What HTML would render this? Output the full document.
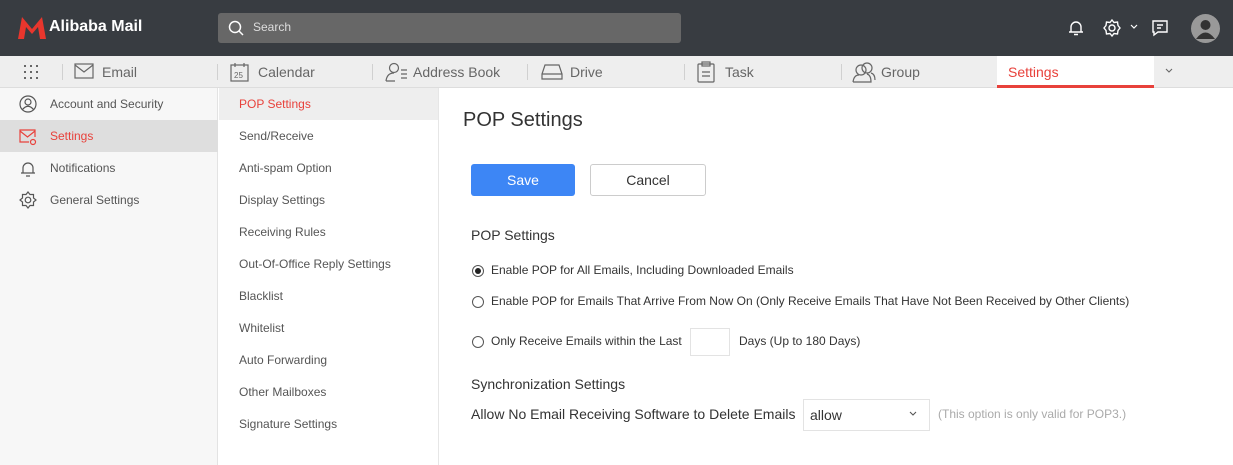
<!DOCTYPE html>
<html><head><meta charset="utf-8"><style>
*{box-sizing:border-box;margin:0;padding:0}
body{width:1233px;height:465px;overflow:hidden;font-family:"Liberation Sans",Arial,sans-serif;background:#fff;position:relative;color:#333}
.abs{position:absolute}
#hdr{left:0;top:0;width:1233px;height:56px;background:#383c41}
#tabs{left:0;top:56px;width:1233px;height:32px;background:#eeeeee;border-bottom:1px solid #ddd}
.tab{position:absolute;top:0;height:32px;line-height:32px;font-size:14px;color:#666}
.sep{position:absolute;top:8px;width:1px;height:16px;background:#d0d0d0}
#side{left:0;top:88px;width:218px;height:377px;background:#f7f7f7;border-right:1px solid #e3e3e3}
.si{position:absolute;left:0;width:218px;height:32px;line-height:32px;font-size:12px;color:#555;padding-left:50px}
#col2{left:219px;top:88px;width:220px;height:377px;background:#fff;border-right:1px solid #e6e6e6}
.ci{position:absolute;left:0;width:219px;height:32px;line-height:32px;font-size:12px;color:#555;padding-left:20px}
.t{position:absolute;font-size:12px;color:#333;white-space:nowrap}
.rad{position:absolute;width:12px;height:12px;border:1px solid #555;border-radius:50%}
</style></head><body>
<div id="hdr" class="abs">
 <svg class="abs" style="left:18px;top:17px" width="28" height="22" viewBox="0 0 28 22"><path d="M0 22 L4 0 L14 12 L24 0 L28 22 L22 22 L20 10 L14 17 L8 10 L6 22Z" fill="#e8362d"/></svg>
 <div class="t" style="left:49px;top:18px;font-size:16px;font-weight:bold;color:#fff">Alibaba Mail</div>
 <div class="abs" style="left:218px;top:13px;width:463px;height:30px;background:#676767;border-radius:3px"></div>
 <svg class="abs" style="left:228px;top:20px" width="16" height="16" viewBox="0 0 16 16"><circle cx="7" cy="7" r="5.5" fill="none" stroke="#fff" stroke-width="1.5"/><path d="M11 11 L15 15" stroke="#fff" stroke-width="1.5"/></svg>
 <div class="t" style="left:253px;top:20px;color:#ddd">Search</div>
 <svg class="abs" style="left:1067px;top:19px" width="18" height="18" viewBox="0 0 18 18" fill="none" stroke="#fff" stroke-width="1.4"><path d="M4 13 V8 a5 5 0 0 1 10 0 V13 Z M2 13 H16 M7 15.5 H11"/></svg>
 <svg class="abs" style="left:1102px;top:18px" width="20" height="20" viewBox="0 0 20 20" fill="none" stroke="#fff" stroke-width="1.4"><circle cx="10" cy="10" r="3"/><path d="M10 2 L12 4.5 L15.5 4 L16 7.5 L18 10 L16 12.5 L15.5 16 L12 15.5 L10 18 L8 15.5 L4.5 16 L4 12.5 L2 10 L4 7.5 L4.5 4 L8 4.5Z"/></svg>
 <svg class="abs" style="left:1130px;top:24px" width="8" height="6" viewBox="0 0 8 6"><path d="M1 1 L4 4 L7 1" stroke="#fff" fill="none" stroke-width="1.2"/></svg>
 <svg class="abs" style="left:1151px;top:19px" width="18" height="18" viewBox="0 0 18 18" fill="none" stroke="#fff" stroke-width="1.4"><path d="M2 2 H16 V13 H7 L3 16 V13 H2Z M6 6 H12 M6 9 H10"/></svg>
 <svg class="abs" style="left:1191px;top:14px" width="29" height="29" viewBox="0 0 29 29"><circle cx="14.5" cy="14.5" r="14.5" fill="#999"/><circle cx="14.5" cy="11" r="5" fill="#333"/><path d="M5 25 Q14.5 12 24 25Z" fill="#333"/></svg>
</div>
<div id="tabs" class="abs">
 <svg class="abs" style="left:23px;top:8px" width="16" height="16"><g fill="#666"><rect x="1" y="1" width="2" height="2"/><rect x="7" y="1" width="2" height="2"/><rect x="13" y="1" width="2" height="2"/><rect x="1" y="7" width="2" height="2"/><rect x="7" y="7" width="2" height="2"/><rect x="13" y="7" width="2" height="2"/><rect x="1" y="13" width="2" height="2"/><rect x="7" y="13" width="2" height="2"/><rect x="13" y="13" width="2" height="2"/></g></svg>
 <div class="sep" style="left:62px"></div><div class="sep" style="left:217px"></div><div class="sep" style="left:372px"></div><div class="sep" style="left:527px"></div><div class="sep" style="left:684px"></div><div class="sep" style="left:841px"></div>
 <svg class="abs" style="left:74px;top:7px" width="20" height="16" fill="none" stroke="#666" stroke-width="1.2"><rect x="1" y="1" width="18" height="14"/><path d="M1 2 L10 9 L19 2"/></svg>
 <div class="tab" style="left:102px">Email</div>
 <svg class="abs" style="left:230px;top:6px" width="20" height="20" fill="none" stroke="#666" stroke-width="1.2"><rect x="1" y="3" width="17" height="16"/><path d="M5 1 V5 M14 1 V5"/><text x="4" y="16" font-size="8" fill="#666" stroke="none" font-family="Liberation Sans">25</text></svg>
 <div class="tab" style="left:258px">Calendar</div>
 <svg class="abs" style="left:385px;top:6px" width="24" height="20" fill="none" stroke="#666" stroke-width="1.2"><circle cx="9" cy="6" r="4.5"/><path d="M1 19 Q2 11 9 11 M1 19 H10 M16 8 H22 M16 12 H22 M16 16 H22"/></svg>
 <div class="tab" style="left:413px">Address Book</div>
 <svg class="abs" style="left:541px;top:8px" width="22" height="16" fill="none" stroke="#666" stroke-width="1.2"><path d="M4 1 H18 L21 10 V15 H1 V10Z M1 10 H21"/></svg>
 <div class="tab" style="left:570px">Drive</div>
 <svg class="abs" style="left:697px;top:5px" width="18" height="22" fill="none" stroke="#666" stroke-width="1.2"><rect x="1" y="3" width="16" height="18" rx="1"/><rect x="5" y="1" width="8" height="4"/><path d="M5 11 H13 M5 15 H13"/></svg>
 <div class="tab" style="left:725px">Task</div>
 <svg class="abs" style="left:852px;top:5px" width="24" height="22" fill="none" stroke="#666" stroke-width="1.2"><circle cx="15" cy="7" r="5"/><circle cx="9" cy="9" r="5"/><path d="M1 21 Q2 14 7 14 M1 21 H19 Q19 14 15 13 M23 19 Q23 13 19 12"/></svg>
 <div class="tab" style="left:881px">Group</div>
 <div class="abs" style="left:997px;top:0;width:157px;height:32px;background:#fff;border-bottom:3px solid #e8413b"></div>
 <div class="tab" style="left:1008px;color:#e8413b">Settings</div>
 <svg class="abs" style="left:1165px;top:12px" width="8" height="6"><path d="M1 1 L4 4 L7 1" stroke="#666" fill="none" stroke-width="1.1"/></svg>
</div>
<div id="side" class="abs">
 <div class="si" style="top:0">Account and Security</div>
 <div class="si" style="top:32px;background:#dedede;color:#e8413b">Settings</div>
 <div class="si" style="top:64px">Notifications</div>
 <div class="si" style="top:96px">General Settings</div>
 <svg class="abs" style="left:19px;top:7px" width="18" height="18" fill="none" stroke="#555" stroke-width="1.2"><circle cx="9" cy="9" r="8"/><circle cx="9" cy="7" r="3"/><path d="M3.5 14.5 Q9 8 14.5 14.5"/></svg>
 <svg class="abs" style="left:19px;top:40px" width="18" height="18" fill="none" stroke="#e8413b" stroke-width="1.2"><path d="M10 14 H1 V2 H16 V9 M1 3 L8.5 9 L16 3"/><circle cx="14" cy="14" r="2.5"/></svg>
 <svg class="abs" style="left:20px;top:72px" width="16" height="18" fill="none" stroke="#555" stroke-width="1.2"><path d="M3 13 V8 a5 5 0 0 1 10 0 V13Z M1 13 H15 M6 16 H10"/></svg>
 <svg class="abs" style="left:19px;top:103px" width="18" height="18" fill="none" stroke="#555" stroke-width="1.2"><circle cx="9" cy="9" r="2.8"/><path d="M9 1 L11 3.5 L14.5 3.5 L14.5 7 L17 9 L14.5 11 L14.5 14.5 L11 14.5 L9 17 L7 14.5 L3.5 14.5 L3.5 11 L1 9 L3.5 7 L3.5 3.5 L7 3.5Z"/></svg>
</div>
<div id="col2" class="abs">
 <div class="ci" style="top:0;background:#eeeeee;color:#e8413b">POP Settings</div>
 <div class="ci" style="top:32px">Send/Receive</div>
 <div class="ci" style="top:64px">Anti-spam Option</div>
 <div class="ci" style="top:96px">Display Settings</div>
 <div class="ci" style="top:128px">Receiving Rules</div>
 <div class="ci" style="top:160px">Out-Of-Office Reply Settings</div>
 <div class="ci" style="top:192px">Blacklist</div>
 <div class="ci" style="top:224px">Whitelist</div>
 <div class="ci" style="top:256px">Auto Forwarding</div>
 <div class="ci" style="top:288px">Other Mailboxes</div>
 <div class="ci" style="top:320px">Signature Settings</div>
</div>
<div class="t" style="left:463px;top:109px;font-size:20px">POP Settings</div>
<div class="abs" style="left:471px;top:164px;width:104px;height:32px;background:#3d86f5;border-radius:3px;color:#fff;font-size:14px;text-align:center;line-height:32px">Save</div>
<div class="abs" style="left:590px;top:164px;width:116px;height:32px;border:1px solid #ccc;border-radius:3px;color:#333;font-size:14px;text-align:center;line-height:30px">Cancel</div>
<div class="t" style="left:471px;top:227px;font-size:14px">POP Settings</div>
<div class="rad" style="left:472px;top:265px"></div><div class="abs" style="left:475px;top:268px;width:6px;height:6px;border-radius:50%;background:#222"></div>
<div class="t" style="left:491px;top:263px">Enable POP for All Emails, Including Downloaded Emails</div>
<div class="rad" style="left:472px;top:296px"></div>
<div class="t" style="left:491px;top:294px">Enable POP for Emails That Arrive From Now On (Only Receive Emails That Have Not Been Received by Other Clients)</div>
<div class="rad" style="left:472px;top:336px"></div>
<div class="t" style="left:491px;top:334px">Only Receive Emails within the Last</div>
<div class="abs" style="left:690px;top:328px;width:40px;height:28px;border:1px solid #e3e3e3"></div>
<div class="t" style="left:739px;top:334px">Days (Up to 180 Days)</div>
<div class="t" style="left:471px;top:376px;font-size:14px">Synchronization Settings</div>
<div class="t" style="left:471px;top:406px;font-size:14px">Allow No Email Receiving Software to Delete Emails</div>
<div class="abs" style="left:803px;top:399px;width:127px;height:32px;border:1px solid #e3e3e3"></div>
<div class="t" style="left:810px;top:407px;font-size:14px">allow</div>
<svg class="abs" style="left:909px;top:411px" width="8" height="6"><path d="M1 1 L4 4 L7 1" stroke="#555" fill="none" stroke-width="1.1"/></svg>
<div class="t" style="left:938px;top:407px;color:#aaa">(This option is only valid for POP3.)</div>
</body></html>
